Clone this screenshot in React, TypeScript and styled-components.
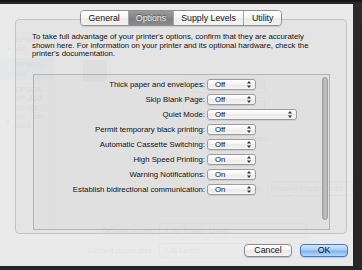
import styled, { createGlobalStyle } from "styled-components";

const GlobalStyle = createGlobalStyle`
  html, body {
    margin: 0;
    padding: 0;
    background: #1d1d1d;
  }
  body {
    font-family: "Liberation Sans", Arial, sans-serif;
    -webkit-font-smoothing: antialiased;
  }
`;

const options = [
  { label: "Thick paper and envelopes:", value: "Off" },
  { label: "Skip Blank Page:", value: "Off" },
  { label: "Quiet Mode:", value: "Off", wide: true },
  { label: "Permit temporary black printing:", value: "Off" },
  { label: "Automatic Cassette Switching:", value: "Off" },
  { label: "High Speed Printing:", value: "On" },
  { label: "Warning Notifications:", value: "On" },
  { label: "Establish bidirectional communication:", value: "On" },
];

const tabs = ["General", "Options", "Supply Levels", "Utility"];

const printers = [
  { name: "EPSON", status: "Idle" },
  { name: "EPSON", status: "Idle", selected: true },
  { name: "EPSON XP-860 Series...", status: "Idle, Last Used" },
];

const Arrows = () => (
  <svg width="4" height="7" viewBox="0 0 4 7">
    <path d="M2 0 L4 2.6 L0 2.6 Z" fill="#333" />
    <path d="M2 7 L4 4.4 L0 4.4 Z" fill="#333" />
  </svg>
);

const App = () => {
  return (
    <>
      <GlobalStyle />
      <Screen>
        <Window>
          <BgWindow>
            <Sidebar>
              {printers.map((p, i) => (
                <PrinterItem key={i} selected={p.selected}>
                  <PrinterName>{p.name}</PrinterName>
                  <PrinterStatus>
                    <Dot />
                    {p.status}
                  </PrinterStatus>
                </PrinterItem>
              ))}
            </Sidebar>
            <BgMain>
              <BgTop>
                <PrinterIcon />
                <BgButtons>
                  <GhostButton>Open Print Queue...</GhostButton>
                  <GhostButton>Supplies...</GhostButton>
                </BgButtons>
              </BgTop>
              <GhostModel>EPSON XP-860 Series</GhostModel>
              <BgShare>
                <GhostText>Network</GhostText>
                <GhostButton wide>Sharing Preferences...</GhostButton>
              </BgShare>
              <BgDefaults>
                <DefaultRow>
                  <DefaultLabel>Default printer:</DefaultLabel>
                  <GhostSelect>Last Printer Used</GhostSelect>
                </DefaultRow>
                <DefaultRow>
                  <DefaultLabel>Default paper size:</DefaultLabel>
                  <GhostSelect>US Letter</GhostSelect>
                </DefaultRow>
              </BgDefaults>
            </BgMain>
          </BgWindow>

          <Sheet>
            <TabBar>
              <Tabs>
                {tabs.map((t, i) => (
                  <Tab key={t} active={t === "Options"} first={i === 0} last={i === tabs.length - 1}>
                    {t}
                  </Tab>
                ))}
              </Tabs>
            </TabBar>
            <GroupBox>
              <Intro>
                To take full advantage of your printer's options, confirm that they are accurately
                <br />
                shown here. For information on your printer and its optional hardware, check the
                <br />
                printer's documentation.
              </Intro>
              <ScrollBox>
                <RowList>
                  {options.map((o) => (
                    <Row key={o.label}>
                      <Label>{o.label}</Label>
                      <Popup wide={o.wide}>
                        <span>{o.value}</span>
                        <Arrows />
                      </Popup>
                    </Row>
                  ))}
                </RowList>
                <Track>
                  <Thumb />
                </Track>
              </ScrollBox>
            </GroupBox>
            <Footer>
              <Button>Cancel</Button>
              <Button primary>OK</Button>
            </Footer>
          </Sheet>
        </Window>
      </Screen>
    </>
  );
};

export default App;

const Screen = styled.div`
  width: 362px;
  height: 270px;
  padding-top: 4px;
  box-sizing: border-box;
  background: linear-gradient(#101010, #2a2a2a 3px, #262626);
  overflow: hidden;
`;

const Window = styled.div`
  position: relative;
  width: 353px;
  height: 262px;
  overflow: hidden;
  background: #ececec;
`;

/* background window, seen through the sheet */

const BgWindow = styled.div`
  display: flex;
  height: 100%;
`;

const Sidebar = styled.div`
  width: 100px;
  padding-top: 29px;
  background: #e6e8ec;
  border-right: 1px solid #c8c8c8;
`;

const PrinterItem = styled.div<{ selected?: boolean }>`
  height: 20px;
  padding: 2px 0 0 15px;
  margin-bottom: 3px;
  background: ${(p) => (p.selected ? "#9fb8d8" : "transparent")};
`;

const PrinterName = styled.div`
  font-size: 8px;
  line-height: 9px;
  color: #333;
`;

const PrinterStatus = styled.div`
  display: flex;
  align-items: center;
  gap: 3px;
  margin-left: -8px;
  font-size: 7.5px;
  line-height: 9px;
  color: #555;
`;

const Dot = styled.span`
  width: 4px;
  height: 4px;
  border-radius: 50%;
  background: #5cbf3a;
`;

const BgMain = styled.div`
  flex: 1;
  display: flex;
  flex-direction: column;
  padding: 52px 0 0 28px;
`;

const BgTop = styled.div`
  display: flex;
  gap: 76px;
`;

const PrinterIcon = styled.div`
  width: 24px;
  height: 22px;
  margin-top: 4px;
  border-radius: 4px;
  background: #888;
`;

const BgButtons = styled.div`
  display: flex;
  flex-direction: column;
  gap: 4px;
  margin-top: 22px;
`;

const GhostButton = styled.div<{ wide?: boolean }>`
  width: ${(p) => (p.wide ? "84px" : "80px")};
  height: 13px;
  border: 1px solid #999;
  border-radius: 3px;
  font-size: 8px;
  line-height: 13px;
  text-align: center;
  color: #444;
  white-space: nowrap;
`;

const GhostModel = styled.div`
  margin: 22px 0 0 103px;
  font-size: 8px;
  color: #444;
`;

const GhostText = styled.div`
  width: 28px;
  font-size: 8px;
  color: #444;
`;

const BgShare = styled.div`
  display: flex;
  align-items: center;
  gap: 8px;
  margin: 38px 0 0 148px;
`;

const BgDefaults = styled.div`
  display: flex;
  flex-direction: column;
  gap: 5px;
  margin-top: 27px;
`;

const DefaultRow = styled.div`
  display: flex;
  align-items: center;
  gap: 4px;
`;

const DefaultLabel = styled.div`
  width: 72px;
  text-align: right;
  font-size: 8px;
  color: #444;
`;

const GhostSelect = styled.div`
  width: 140px;
  height: 13px;
  padding-left: 6px;
  border: 1px solid #999;
  border-radius: 3px;
  font-size: 8px;
  line-height: 13px;
  color: #444;
`;

/* the options sheet */

const Sheet = styled.div`
  position: absolute;
  inset: 0;
  display: flex;
  flex-direction: column;
  background: rgba(234, 234, 234, 0.94);
`;

const TabBar = styled.div`
  position: relative;
  z-index: 1;
  display: flex;
  justify-content: center;
  margin: 6px 6px 0 15px;
`;

const Tabs = styled.div`
  display: flex;
  height: 14px;
  border: 1px solid #8f8f8f;
  border-radius: 4px;
  overflow: hidden;
  box-shadow: 0 1px 1px rgba(0, 0, 0, 0.12);
`;

const Tab = styled.div<{ active?: boolean; first?: boolean; last?: boolean }>`
  padding: 0 ${(p) => (p.first || p.last ? "8px" : "7px")};
  font-size: 8.8px;
  line-height: 14px;
  color: ${(p) => (p.active ? "#ececec" : "#111")};
  text-shadow: ${(p) => (p.active ? "0 -1px 0 rgba(0,0,0,0.35)" : "0 1px 0 rgba(255,255,255,0.8)")};
  background: ${(p) =>
    p.active
      ? "linear-gradient(#9a9a9a, #858585 50%, #7c7c7c 50%, #8a8a8a)"
      : "linear-gradient(#ffffff, #f6f6f6 50%, #ebebeb 50%, #f2f2f2)"};
  border-left: ${(p) => (p.first ? "none" : "1px solid #a3a3a3")};
`;

const GroupBox = styled.div`
  height: 215px;
  margin: -7px 6px 0 15px;
  padding: 13px 16px 2px 16px;
  box-sizing: border-box;
  display: flex;
  flex-direction: column;
  border: 1px solid #c4c4c4;
  border-radius: 4px;
  background: rgba(0, 0, 0, 0.025);
`;

const Intro = styled.p`
  margin: 0;
  font-size: 7.8px;
  line-height: 8.6px;
  color: #111;
  white-space: nowrap;
`;

const ScrollBox = styled.div`
  display: flex;
  height: 156px;
  margin: 15px 0 0 1px;
  box-sizing: border-box;
  border: 1px solid #b4b4b4;
  background: rgba(0, 0, 0, 0.015);
`;

const RowList = styled.div`
  flex: 1;
  display: flex;
  flex-direction: column;
  padding-top: 2px;
`;

const Row = styled.div`
  display: flex;
  align-items: center;
  height: 15px;
`;

const Label = styled.div`
  width: 171px;
  text-align: right;
  font-size: 7.8px;
  color: #111;
  white-space: nowrap;
`;

const Popup = styled.div<{ wide?: boolean }>`
  display: flex;
  align-items: center;
  justify-content: space-between;
  width: ${(p) => (p.wide ? "90px" : "49px")};
  height: 11px;
  margin-left: 2px;
  padding: 0 4px 0 7px;
  box-sizing: border-box;
  border: 1px solid #9c9c9c;
  border-radius: 3px;
  background: linear-gradient(#ffffff, #f3f3f3 50%, #e9e9e9 50%, #f5f5f5);
  box-shadow: 0 1px 0 rgba(0, 0, 0, 0.08);
  font-size: 7.8px;
  color: #111;
`;

const Track = styled.div`
  display: flex;
  width: 9px;
  padding: 2px 1px 9px 2px;
  box-sizing: border-box;
`;

const Thumb = styled.div`
  flex: 1;
  border-radius: 3px;
  background: linear-gradient(90deg, #a9a9a9, #c2c2c2 60%, #b0b0b0);
  border: 1px solid #a0a0a0;
`;

const Footer = styled.div`
  display: flex;
  justify-content: flex-end;
  gap: 8px;
  margin-top: 10px;
  padding-right: 5px;
`;

const Button = styled.div<{ primary?: boolean }>`
  width: 48px;
  height: 13px;
  box-sizing: border-box;
  border: 1px solid ${(p) => (p.primary ? "#5177b0" : "#8d8d8d")};
  border-radius: 4px;
  background: ${(p) =>
    p.primary
      ? "linear-gradient(#d7e8fc, #a9cdf6 45%, #7fb3ee 55%, #b6d8fa)"
      : "linear-gradient(#ffffff, #f4f4f4 50%, #e8e8e8 50%, #f4f4f4)"};
  box-shadow: 0 1px 1px rgba(0, 0, 0, 0.15);
  font-size: 8.8px;
  line-height: 11px;
  text-align: center;
  color: #111;
`;
